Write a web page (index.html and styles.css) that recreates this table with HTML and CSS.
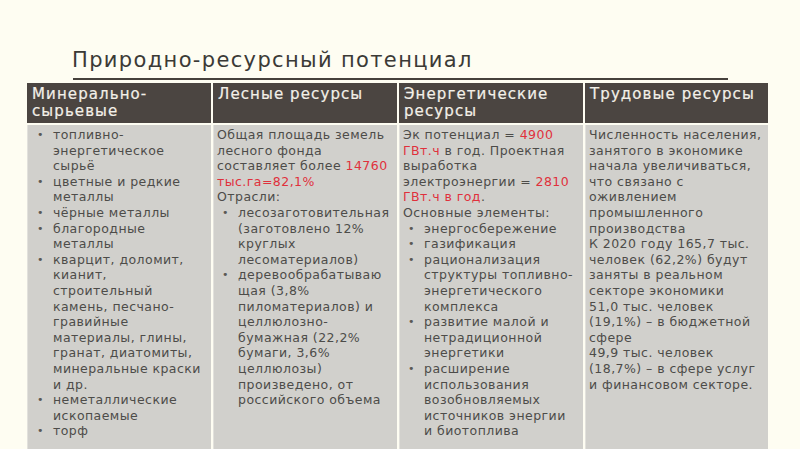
FILE: index.html
```html
<!DOCTYPE html>
<html lang="ru">
<head>
<meta charset="utf-8">
<link rel="stylesheet" href="styles.css">
</head>
<body>
<div class="slide">
  <h1 class="title">Природно-ресурсный потенциал</h1>
  <div class="rule"></div>
  <div class="grid">
    <div class="th">Минерально-<br>сырьевые</div>
    <div class="th">Лесные ресурсы</div>
    <div class="th">Энергетические<br>ресурсы</div>
    <div class="th">Трудовые ресурсы</div>

    <div class="td td1">
      <ul class="list">
        <li>топливно-<br>энергетическое<br>сырьё</li>
        <li>цветные и редкие<br>металлы</li>
        <li>чёрные металлы</li>
        <li>благородные<br>металлы</li>
        <li>кварцит, доломит,<br>кианит,<br>строительный<br>камень, песчано-<br>гравийные<br>материалы, глины,<br>гранат, диатомиты,<br>минеральные краски<br>и др.</li>
        <li>неметаллические<br>ископаемые</li>
        <li>торф</li>
      </ul>
    </div>
    <div class="td">
      <p>Общая площадь земель<br>лесного фонда<br>составляет более <span class="red">14760<br>тыс.га=82,1%</span><br>Отрасли:</p>
      <ul class="list">
        <li>лесозаготовительная<br>(заготовлено 12%<br>круглых<br>лесоматериалов)</li>
        <li>деревообрабатываю<br>щая (3,8%<br>пиломатериалов) и<br>целлюлозно-<br>бумажная (22,2%<br>бумаги, 3,6%<br>целлюлозы)<br>произведено, от<br>российского объема</li>
      </ul>
    </div>
    <div class="td">
      <p>Эк потенциал = <span class="red">4900<br>ГВт.ч</span> в год. Проектная<br>выработка<br>электроэнергии = <span class="red">2810<br>ГВт.ч в год</span>.<br>Основные элементы:</p>
      <ul class="list">
        <li>энергосбережение</li>
        <li>газификация</li>
        <li>рационализация<br>структуры топливно-<br>энергетического<br>комплекса</li>
        <li>развитие малой и<br>нетрадиционной<br>энергетики</li>
        <li>расширение<br>использования<br>возобновляемых<br>источников энергии<br>и биотоплива</li>
      </ul>
    </div>
    <div class="td">
      <p>Численность населения,<br>занятого в экономике<br>начала увеличиваться,<br>что связано с<br>оживлением<br>промышленного<br>производства<br>К 2020 году 165,7 тыс.<br>человек (62,2%) будут<br>заняты в реальном<br>секторе экономики<br>51,0 тыс. человек<br>(19,1%) – в бюджетной<br>сфере<br>49,9 тыс. человек<br>(18,7%) – в сфере услуг<br>и финансовом секторе.</p>
    </div>
  </div>
</div>
</body>
</html>
```
FILE: styles.css
```css
html, body {
  margin: 0;
  padding: 0;
  overflow: hidden;
  background: #fefdf2;
}
.slide {
  width: 800px;
  height: 449px;
  overflow: hidden;
  font-family: "DejaVu Sans", sans-serif;
}
.title {
  margin: 0;
  padding: 46px 0 0 72px;
  font-size: 21px;
  font-weight: normal;
  line-height: 28px;
  letter-spacing: 1.35px;
  color: #3b3a36;
  height: 32px;
}
.rule {
  margin: 0 0 0 73px;
  width: 655px;
  height: 2px;
  background: #46413c;
}
.grid {
  margin: 3px 0 0 27px;
  display: grid;
  grid-template-columns: 184px 184px 184px 183px;
  grid-template-rows: 40px 340px;
  column-gap: 2px;
  row-gap: 2px;
}
.th {
  background: #4b4541;
  color: #f3f0e8;
  font-size: 15px;
  letter-spacing: 1.1px;
  line-height: 16.5px;
  padding: 3px 4px 0 5px;
  white-space: nowrap;
  -webkit-text-stroke: 0.2px #f3f0e8;
}
.td {
  background: #d1d0cc;
  color: #4d4c49;
  font-size: 12.5px;
  letter-spacing: 0.45px;
  line-height: 15.6px;
  padding: 2px 3px 0 4px;
  white-space: nowrap;
  box-shadow: inset 1px 0 0 #e2e1dc;
}
.td1 {
  padding-left: 6px;
}
.td p {
  margin: 0;
}
.list {
  list-style: none;
  margin: 0;
  padding: 0 0 0 21px;
}
.td1 .list {
  padding-left: 20px;
}
.list li {
  position: relative;
}
.list li::before {
  content: "•";
  position: absolute;
  left: -16px;
  top: 0;
  font-size: 11px;
  color: #5a5854;
}
.red {
  color: #e0303c;
}
```
